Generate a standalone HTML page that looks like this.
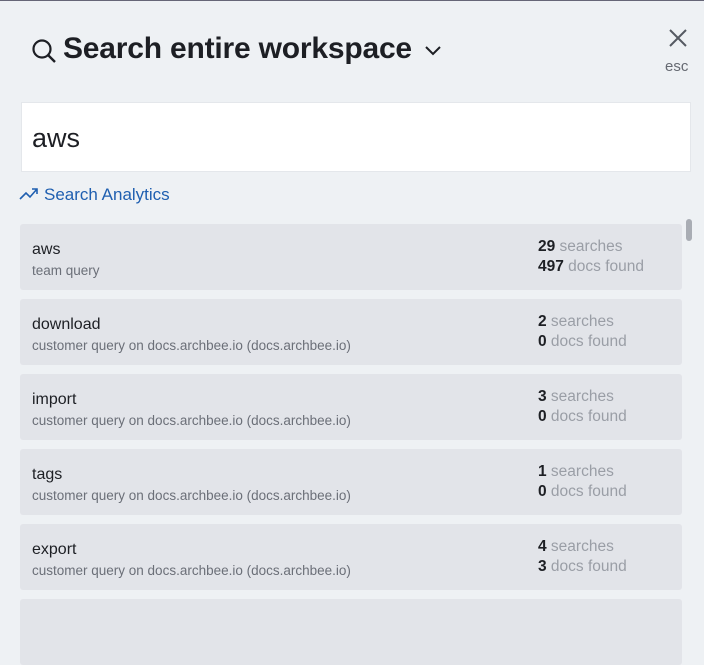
<!DOCTYPE html>
<html><head><style>
body{margin:0;width:704px;height:602px;background:#eef1f4;font-family:"Liberation Sans",sans-serif;overflow:hidden;position:relative}
.t{position:absolute;left:63px;top:32px;font-size:30px;font-weight:bold;color:#1d1f24;letter-spacing:-0.2px}
.in{position:absolute;left:21px;top:102px;width:670px;height:70px;background:#fff;border:1px solid #e4e7eb;box-sizing:border-box}
.in span{position:absolute;left:10px;top:20px;font-size:27px;color:#1d1f24}
.sa{position:absolute;left:44px;top:185px;font-size:17px;color:#1f5fb0}
.c{position:absolute;left:20px;width:662px;height:66px;background:#e2e4e9;border-radius:3px}
.c .n{position:absolute;left:12px;top:17px;font-size:16px;color:#1d1f24}
.c .s{position:absolute;left:12px;top:39px;font-size:13.5px;color:#6b6f78}
.c .r{position:absolute;left:518px;top:13px;font-size:15.5px;color:#9a9ea6;line-height:20px}
.c .r b{color:#1d1f24}
</style></head><body>
<div style="position:absolute;top:0;left:0;width:704px;height:1px;background:#667"></div>
<svg style="position:absolute;left:31px;top:38px" width="26" height="26" viewBox="0 0 26 26"><circle cx="11" cy="11" r="8.5" fill="none" stroke="#1d1f24" stroke-width="2.2"/><line x1="17" y1="17" x2="24" y2="24" stroke="#1d1f24" stroke-width="2.4"/></svg>
<div class="t">Search entire workspace</div>
<svg style="position:absolute;left:424px;top:45px" width="18" height="12"><path d="M2 2l7 7 7-7" fill="none" stroke="#1d1f24" stroke-width="2"/></svg>
<svg style="position:absolute;left:668px;top:28px" width="20" height="20"><path d="M2 2l16 16M18 2L2 18" stroke="#555a62" stroke-width="2"/></svg>
<div style="position:absolute;left:665px;top:58px;font-size:15px;color:#666a72">esc</div>
<div class="in"><span>aws</span></div>
<svg style="position:absolute;left:19px;top:187px" width="20" height="14"><path d="M1 12l6-6 4 4 7-8M13 2h5v5" fill="none" stroke="#1f5fb0" stroke-width="1.6"/></svg>
<div class="sa">Search Analytics</div>
<div style="position:absolute;left:686px;top:219px;width:6px;height:22px;background:#a9adb4;border-radius:3px"></div>
<div class="c" style="top:224px"><div class="n">aws</div><div class="s">team query</div><div class="r"><b>29</b> searches<br><b>497</b> docs found</div></div>
<div class="c" style="top:299px"><div class="n">download</div><div class="s">customer query on docs.archbee.io (docs.archbee.io)</div><div class="r"><b>2</b> searches<br><b>0</b> docs found</div></div>
<div class="c" style="top:374px"><div class="n">import</div><div class="s">customer query on docs.archbee.io (docs.archbee.io)</div><div class="r"><b>3</b> searches<br><b>0</b> docs found</div></div>
<div class="c" style="top:449px"><div class="n">tags</div><div class="s">customer query on docs.archbee.io (docs.archbee.io)</div><div class="r"><b>1</b> searches<br><b>0</b> docs found</div></div>
<div class="c" style="top:524px"><div class="n">export</div><div class="s">customer query on docs.archbee.io (docs.archbee.io)</div><div class="r"><b>4</b> searches<br><b>3</b> docs found</div></div>
<div class="c" style="top:599px"></div>
</body></html>
